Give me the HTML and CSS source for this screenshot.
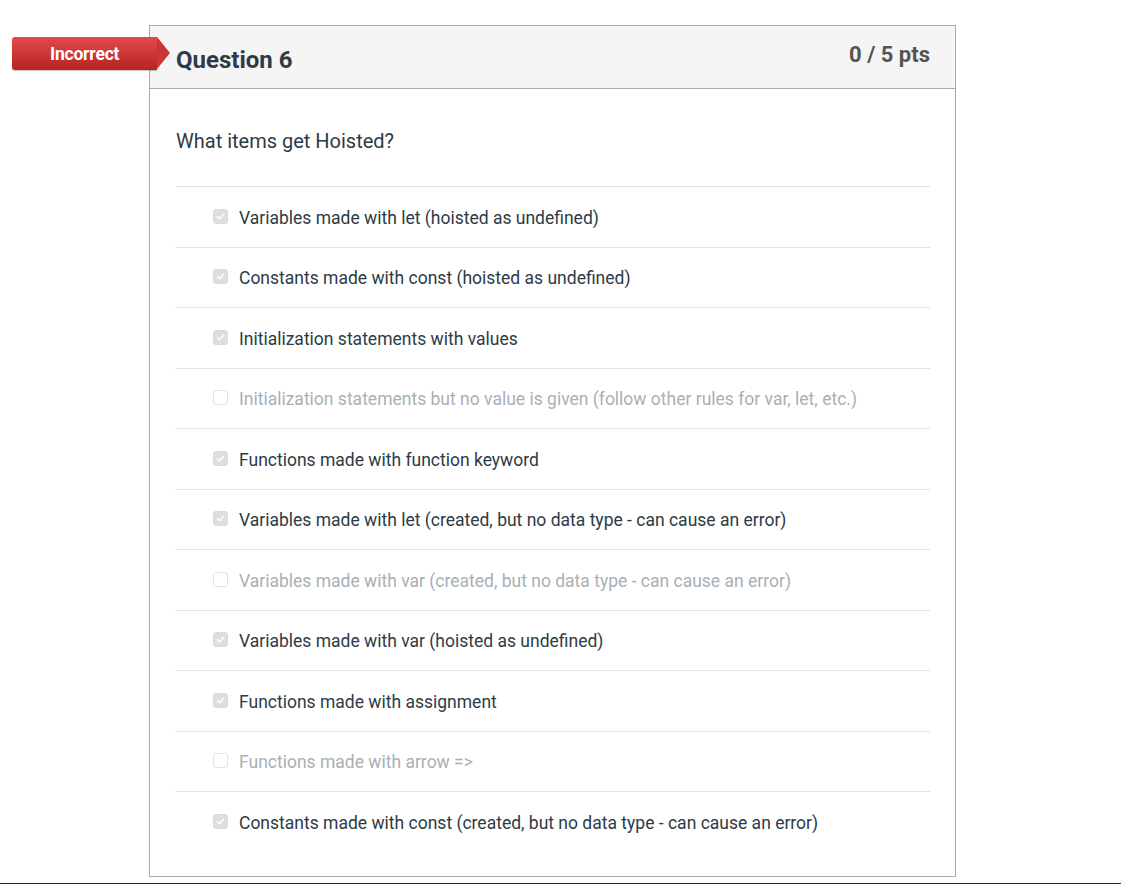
FILE: index.html
```html
<!DOCTYPE html>
<html>
<head>
<meta charset="utf-8">
<link rel="stylesheet" href="styles.css">
</head>
<body>
<div class="page">
  <div class="card">
    <div class="badge">Incorrect</div>
    <div class="card-header">
      <h2 class="title">Question 6</h2>
      <div class="pts">0 / 5 pts</div>
    </div>
    <div class="card-body">
      <p class="question">What items get Hoisted?</p>
      <ul class="answers">
        <li class="answer checked"><span class="box"><svg viewBox="0 0 16 16" width="11" height="11"><path d="M3.5 8.2 L6.6 11.2 L12.5 4.8" fill="none" stroke="#fff" stroke-width="2" stroke-linecap="round" stroke-linejoin="round"/></svg></span><span class="label">Variables made with let (hoisted as undefined)</span></li>
        <li class="answer checked"><span class="box"><svg viewBox="0 0 16 16" width="11" height="11"><path d="M3.5 8.2 L6.6 11.2 L12.5 4.8" fill="none" stroke="#fff" stroke-width="2" stroke-linecap="round" stroke-linejoin="round"/></svg></span><span class="label">Constants made with const (hoisted as undefined)</span></li>
        <li class="answer checked"><span class="box"><svg viewBox="0 0 16 16" width="11" height="11"><path d="M3.5 8.2 L6.6 11.2 L12.5 4.8" fill="none" stroke="#fff" stroke-width="2" stroke-linecap="round" stroke-linejoin="round"/></svg></span><span class="label">Initialization statements with values</span></li>
        <li class="answer"><span class="box"></span><span class="label">Initialization statements but no value is given (follow other rules for var, let, etc.)</span></li>
        <li class="answer checked"><span class="box"><svg viewBox="0 0 16 16" width="11" height="11"><path d="M3.5 8.2 L6.6 11.2 L12.5 4.8" fill="none" stroke="#fff" stroke-width="2" stroke-linecap="round" stroke-linejoin="round"/></svg></span><span class="label">Functions made with function keyword</span></li>
        <li class="answer checked"><span class="box"><svg viewBox="0 0 16 16" width="11" height="11"><path d="M3.5 8.2 L6.6 11.2 L12.5 4.8" fill="none" stroke="#fff" stroke-width="2" stroke-linecap="round" stroke-linejoin="round"/></svg></span><span class="label">Variables made with let (created, but no data type - can cause an error)</span></li>
        <li class="answer"><span class="box"></span><span class="label">Variables made with var (created, but no data type - can cause an error)</span></li>
        <li class="answer checked"><span class="box"><svg viewBox="0 0 16 16" width="11" height="11"><path d="M3.5 8.2 L6.6 11.2 L12.5 4.8" fill="none" stroke="#fff" stroke-width="2" stroke-linecap="round" stroke-linejoin="round"/></svg></span><span class="label">Variables made with var (hoisted as undefined)</span></li>
        <li class="answer checked"><span class="box"><svg viewBox="0 0 16 16" width="11" height="11"><path d="M3.5 8.2 L6.6 11.2 L12.5 4.8" fill="none" stroke="#fff" stroke-width="2" stroke-linecap="round" stroke-linejoin="round"/></svg></span><span class="label">Functions made with assignment</span></li>
        <li class="answer"><span class="box"></span><span class="label">Functions made with arrow =&gt;</span></li>
        <li class="answer checked"><span class="box"><svg viewBox="0 0 16 16" width="11" height="11"><path d="M3.5 8.2 L6.6 11.2 L12.5 4.8" fill="none" stroke="#fff" stroke-width="2" stroke-linecap="round" stroke-linejoin="round"/></svg></span><span class="label">Constants made with const (created, but no data type - can cause an error)</span></li>
      </ul>
    </div>
  </div>
  <div class="bottom-line"></div>
</div>
</body>
</html>
```

FILE: styles.css
```css
* { box-sizing: border-box; }
html, body { margin: 0; padding: 0; background: #fff; }
body {
  font-family: Roboto, "Liberation Sans", Arial, sans-serif;
  color: #2d3b45;
}
.page {
  padding-top: 25px;
}
.card {
  position: relative;
  margin-left: 149px;
  width: 807px;
  border: 1px solid #aaaaaa;
  background: #fff;
}
.badge {
  position: absolute;
  left: -138px;
  top: 11px;
  width: 145px;
  height: 33px;
  background: linear-gradient(#e24a4a, #b72222);
  border-radius: 3px 0 0 3px;
  color: #fff;
  font-weight: bold;
  font-size: 17.5px;
  letter-spacing: -0.2px;
  line-height: 34px;
  padding-left: 38px;
  box-shadow: 0 1px 1px rgba(0,0,0,0.25);
}
.badge::after {
  content: "";
  position: absolute;
  right: -13px;
  top: 0;
  width: 0;
  height: 0;
  border-top: 16.5px solid transparent;
  border-bottom: 16.5px solid transparent;
  border-left: 13px solid #cc3535;
}
.card-header {
  display: flex;
  justify-content: space-between;
  align-items: flex-start;
  height: 63px;
  background: #f5f5f5;
  border-bottom: 1px solid #aaaaaa;
  padding: 0 25px 0 26px;
}
.title {
  margin: 20px 0 0 0;
  font-size: 24px;
  font-weight: bold;
  line-height: 28px;
  color: #2d3b45;
}
.pts {
  margin-top: 16px;
  font-size: 22px;
  font-weight: bold;
  line-height: 26px;
  color: #545454;
}
.card-body {
  padding: 0 25px 23px 25px;
}
.question {
  margin: 39px 0 0 1px;
  font-size: 20px;
  line-height: 26px;
  padding-bottom: 32px;
  border-bottom: 1px solid #e0e0e0;
}
.answers {
  list-style: none;
  margin: 0;
  padding: 0;
}
.answer {
  display: flex;
  align-items: center;
  height: 60.5px;
  padding-left: 38px;
  padding-top: 2px;
  border-bottom: 1px solid #e3e3e3;
  font-size: 17.5px;
  color: #2d3b45;
}
.answer:last-child { border-bottom: none; }
.box {
  width: 15px;
  height: 15px;
  border-radius: 3px;
  border: 1px solid #e2e2e2;
  background: #fff;
  margin-right: 11px;
  margin-top: -3px;
  display: flex;
  align-items: center;
  justify-content: center;
  flex: none;
}
.answer.checked .box {
  background: #dedede;
  border-color: #dadada;
}
.answer:not(.checked) .label {
  color: #a9b0b5;
}
.bottom-line {
  margin-top: 6px;
  height: 1px;
  background: #2a2222;
}
```
